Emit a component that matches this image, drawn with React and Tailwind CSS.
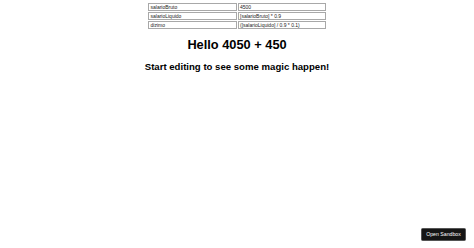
export default function App() {
  const rows = [
    ["salarioBruto", "4500"],
    ["salarioLiquido", "[salarioBruto] * 0.9"],
    ["dizimo", "([salarioLiquido] / 0.9 * 0.1)"],
  ];
  return (
    <div className="relative w-[474px] h-[248px] bg-white text-black text-center font-['Liberation_Sans',Arial,sans-serif]">
      <div className="pt-[2px] flex justify-center">
        <table className="w-[180px] border-separate border-spacing-[1px] text-[5px] leading-[6px] text-[#222] text-left table-fixed">
          <tbody>
            {rows.map((r) => (
              <tr key={r[0]}>
                <td className="border border-[#a8a8a8] px-[1.5px] h-[8px]">{r[0]}</td>
                <td className="border border-[#a8a8a8] px-[1.5px] h-[8px]">{r[1]}</td>
              </tr>
            ))}
          </tbody>
        </table>
      </div>
      <h1 className="mt-[6.5px] text-[12.8px] leading-[15px] font-bold">Hello 4050 + 450</h1>
      <h2 className="mt-[9px] text-[9.6px] leading-[11px] font-bold">Start editing to see some magic happen!</h2>
      <div className="absolute right-[8px] bottom-[7px] w-[45px] h-[13px] flex items-center justify-center rounded-[1.5px] bg-[#151515] border border-[#555] text-white text-[5.2px] leading-none">
        Open Sandbox
      </div>
    </div>
  );
}
